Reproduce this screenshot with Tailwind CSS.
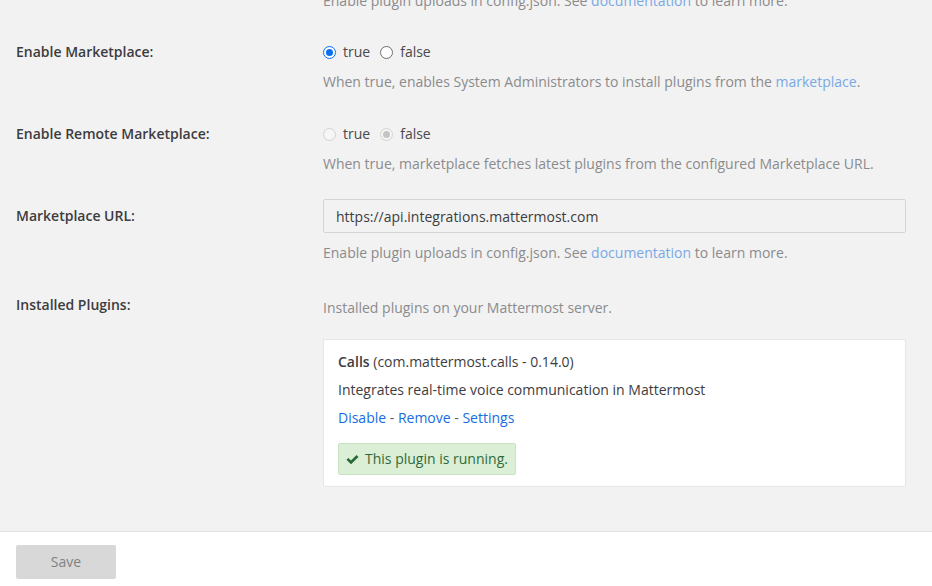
<!DOCTYPE html>
<html>
<head>
<meta charset="utf-8">
<script src="https://cdn.jsdelivr.net/npm/@tailwindcss/browser@4"></script>
</head>
<body class="m-0">
<div class="w-[932px] h-[586px] flex flex-col overflow-hidden bg-white font-['Open_Sans',sans-serif] text-[14px] leading-[20px] text-[#3d3c40]">
  <main class="h-[531px] shrink-0 overflow-hidden bg-[#f2f2f2] pl-4 pr-[26px]">
    <div class="flex flex-col -mt-[9px]">
      <div class="flex h-[20px]">
        <div class="w-[307px] shrink-0"></div>
        <p class="text-[#8b8b8d]">Enable plugin uploads in config.json. See <a class="text-[#78a9e6]">documentation</a> to learn more.</p>
      </div>

      <div class="flex mt-[31px]">
        <div class="w-[307px] shrink-0 font-semibold">Enable Marketplace:</div>
        <div class="flex-1">
          <div class="flex items-center h-[20px] text-[#4a494d]">
            <span class="w-[13px] h-[13px] rounded-full border border-[#0b6ff0] bg-white flex items-center justify-center"><span class="w-[7px] h-[7px] rounded-full bg-[#0b6ff0]"></span></span>
            <span class="ml-[7px]">true</span>
            <span class="w-[13px] h-[13px] ml-[10px] rounded-full border border-[#6e6e6e] bg-white"></span>
            <span class="ml-[7px]">false</span>
          </div>
          <p class="mt-[10px] text-[#8b8b8d]">When true, enables System Administrators to install plugins from the <a class="text-[#78a9e6]">marketplace</a>.</p>
        </div>
      </div>

      <div class="flex mt-[32px]">
        <div class="w-[307px] shrink-0 font-semibold">Enable Remote Marketplace:</div>
        <div class="flex-1">
          <div class="flex items-center h-[20px] text-[#4a494d]">
            <span class="w-[13px] h-[13px] rounded-full border border-[#d2d2d2] bg-[#f6f6f6]"></span>
            <span class="ml-[7px]">true</span>
            <span class="w-[13px] h-[13px] ml-[10px] rounded-full border border-[#d2d2d2] bg-[#f6f6f6] flex items-center justify-center"><span class="w-[7px] h-[7px] rounded-full bg-[#c4c4c4]"></span></span>
            <span class="ml-[7px]">false</span>
          </div>
          <p class="mt-[10px] text-[#8b8b8d]">When true, marketplace fetches latest plugins from the configured Marketplace URL.</p>
        </div>
      </div>

      <div class="flex mt-[25px]">
        <div class="w-[307px] shrink-0 font-semibold pt-[7px]">Marketplace URL:</div>
        <div class="flex-1">
          <div class="h-[34px] border border-[#d5d5d5] rounded-[2px] bg-[#f2f2f2] px-3 pt-[7px] leading-[20px] text-[#3d3c40]">https://api.integrations.mattermost.com</div>
          <p class="mt-[10px] text-[#8b8b8d]">Enable plugin uploads in config.json. See <a class="text-[#78a9e6]">documentation</a> to learn more.</p>
        </div>
      </div>

      <div class="flex mt-[35px]">
        <div class="w-[307px] shrink-0 font-semibold -mt-[3px]">Installed Plugins:</div>
        <div class="flex-1">
          <p class="text-[#8b8b8d]">Installed plugins on your Mattermost server.</p>
          <div class="mt-[21px] h-[148px] bg-white border border-[#e6e6e6] rounded-[2px] px-[14px] pt-[12px]">
            <p><span class="font-semibold">Calls</span> (com.mattermost.calls - 0.14.0)</p>
            <p class="mt-2">Integrates real-time voice communication in Mattermost</p>
            <p class="mt-2 text-[#5f5e62]"><a class="text-[#166de0]">Disable</a> - <a class="text-[#166de0]">Remove</a> - <a class="text-[#166de0]">Settings</a></p>
            <div class="mt-[15px] inline-flex items-center h-[32px] pl-[7px] pr-[7px] bg-[#dbeed6] border border-[#c8e3bf] rounded-[2px] text-[#2f6b3a]">
              <svg class="w-[13px] h-[11px] mr-[6px]" viewBox="0 0 13 11"><path d="M0.5 5.8 2.4 3.9 5 6.4 10.5 1 12.5 2.9 5 10.2Z" fill="#2a6a36"/></svg>
              <span>This plugin is running.</span>
            </div>
          </div>
        </div>
      </div>
    </div>
  </main>
  <footer class="h-[55px] shrink-0 border-t border-[#e2e2e2] bg-white pl-4 pt-[13px]">
    <div class="w-[100px] h-[34px] bg-[#d8d8d8] rounded-[2px] flex items-center justify-center text-[#808083]">Save</div>
  </footer>
</div>
</body>
</html>
